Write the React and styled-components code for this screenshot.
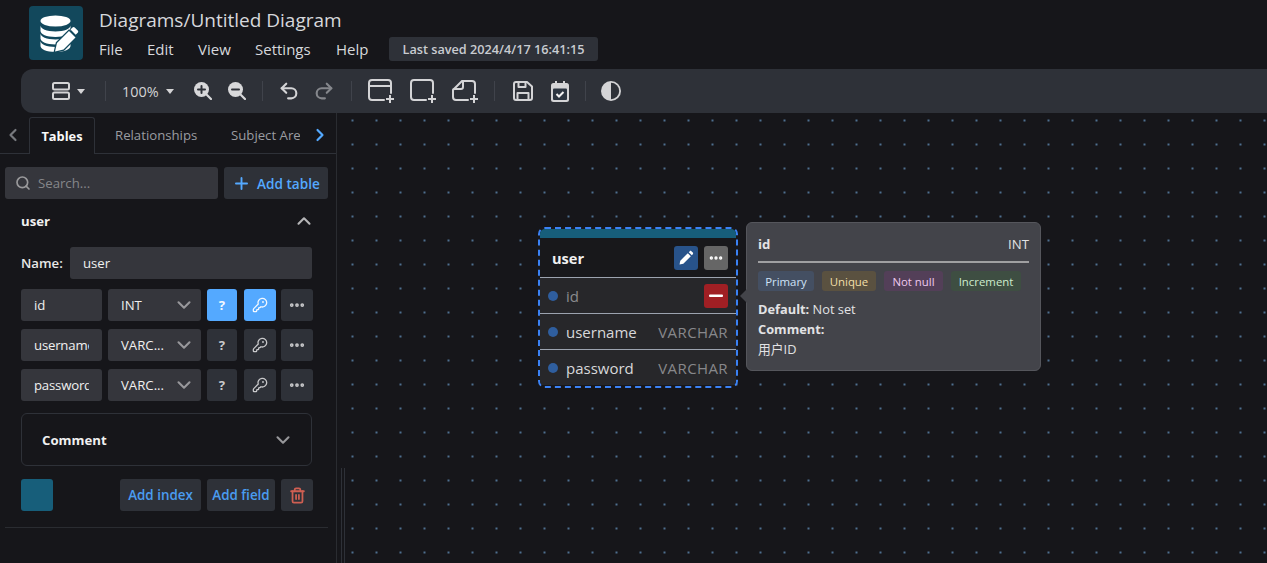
import styled, { createGlobalStyle } from "styled-components";
import { ChevronDown, ChevronUp, ChevronLeft, ChevronRight, Search, Plus, KeyRound, Ellipsis, Trash2, Undo2, Redo2 } from "lucide-react";

const Global = createGlobalStyle`
  html, body { margin: 0; height: 100%; background: #16161a; overflow: hidden; }
  * { box-sizing: border-box; }
  body { font-family: "Open Sans", "Noto Sans CJK SC", sans-serif; color: #f0f0f0; }
`;

const Page = styled.div`
  width: 1267px;
  height: 563px;
  display: flex;
  flex-direction: column;
  overflow: hidden;
`;

const Header = styled.header`
  height: 69px;
  display: flex;
  padding: 6px 0 0 29px;
  gap: 16px;
`;

const Logo = styled.div`
  width: 54px;
  height: 54px;
  border-radius: 4px;
  background: #12485c;
`;

const HeaderText = styled.div`
  display: flex;
  flex-direction: column;
  padding-top: 1px;
`;

const Title = styled.div`
  font-size: 19px;
  line-height: 26px;
  color: #d6d8dc;
`;

const MenuRow = styled.nav`
  display: flex;
  align-items: center;
  margin-top: 4px;
  height: 24px;
`;

const MenuItem = styled.span`
  font-size: 15px;
  color: #d6d8dc;
  width: ${(p) => p.$w}px;
`;

const SavedBadge = styled.span`
  height: 24px;
  width: 209px;
  background: #2e3138;
  border-radius: 3px;
  font-size: 12.7px;
  font-weight: 600;
  color: #c9ccd1;
  display: flex;
  align-items: center;
  justify-content: center;
`;

const Toolbar = styled.div`
  height: 44px;
  margin-left: 21px;
  background: #2e3138;
  border-radius: 12px 0 0 12px;
  display: flex;
  align-items: center;
  color: #d4d4d6;
  padding-left: 31px;
`;

const ToolGroup = styled.div`
  display: flex;
  align-items: center;
  gap: ${(p) => p.$gap || 0}px;
  margin-left: ${(p) => p.$ml || 0}px;
`;

const Sep = styled.div`
  width: 1px;
  height: 20px;
  background: #40434b;
  margin: 0 ${(p) => p.$r}px 0 ${(p) => p.$l}px;
`;

const Percent = styled.span`
  font-size: 14.4px;
  color: #d4d4d6;
  margin-right: 7px;
`;

const Caret = styled.span`
  width: 0;
  height: 0;
  border-left: 4.5px solid transparent;
  border-right: 4.5px solid transparent;
  border-top: 5px solid #d4d4d6;
  margin-left: ${(p) => p.$ml || 0}px;
`;

const Main = styled.div`
  flex: 1;
  display: flex;
  min-height: 0;
`;

const Sidebar = styled.aside`
  width: 337px;
  flex: none;
  border-right: 1px solid #2a2c31;
  display: flex;
  flex-direction: column;
`;

const Tabs = styled.div`
  height: 41px;
  padding-top: 4px;
  border-bottom: 1px solid #2e3138;
  display: flex;
  align-items: stretch;
`;

const TabArrow = styled.div`
  width: ${(p) => p.$w}px;
  flex: none;
  display: flex;
  align-items: center;
  justify-content: ${(p) => p.$align || "center"};
  padding-left: ${(p) => p.$pl || 0}px;
  color: ${(p) => (p.$on ? "#54a9ff" : "#77797e")};
`;

const ActiveTab = styled.div`
  width: 66px;
  flex: none;
  border: 1px solid #2e3138;
  border-bottom: none;
  border-radius: 3px 3px 0 0;
  font-size: 12.8px;
  font-weight: 700;
  color: #f9f9f9;
  display: flex;
  align-items: center;
  justify-content: center;
  margin-bottom: -1px;
  background: #16161a;
`;

const Tab = styled.div`
  font-size: 13.2px;
  color: #9a9ca1;
  display: flex;
  align-items: center;
  flex: none;
  margin-left: ${(p) => p.$ml}px;
  width: ${(p) => p.$w}px;
  overflow: hidden;
  white-space: nowrap;
`;

const SearchRow = styled.div`
  display: flex;
  gap: 6px;
  padding: 13px 8px 0 5px;
`;

const SearchBox = styled.div`
  flex: 1;
  height: 32px;
  background: #35363c;
  border-radius: 3px;
  display: flex;
  align-items: center;
  gap: 7px;
  padding-left: 10px;
  font-size: 13.2px;
  color: #85868a;
`;

const AddTable = styled.div`
  width: 104px;
  height: 32px;
  background: #2e3138;
  border-radius: 3px;
  display: flex;
  align-items: center;
  gap: 6px;
  padding-left: 8px;
  font-size: 13.6px;
  font-weight: 600;
  color: #54a9ff;
`;

const Section = styled.section`
  padding: 0 16px;
  border-bottom: 1px solid #2a2c31;
  margin: 0 8px 0 5px;
  height: 329px;
`;

const SectionHead = styled.div`
  display: flex;
  justify-content: space-between;
  align-items: center;
  height: 22px;
  margin-top: 11px;
  font-size: 13.2px;
  font-weight: 700;
  & svg { margin-right: -3px; }
`;

const NameRow = styled.div`
  display: flex;
  align-items: center;
  margin-top: 15px;
  font-size: 13.2px;
  font-weight: 600;
  color: #e8e8e8;
`;

const Label = styled.span`
  width: 49px;
  flex: none;
`;

const Input = styled.div`
  height: 32px;
  width: ${(p) => p.$w}px;
  flex: none;
  background: #35363c;
  border-radius: 3px;
  display: flex;
  align-items: center;
  padding-left: 13px;
  font-size: 13.2px;
  font-weight: 400;
  color: #f0f0f0;
  overflow: hidden;
  white-space: nowrap;
`;

const Clip = styled.span`
  display: block;
  width: 55px;
  overflow: hidden;
  letter-spacing: -0.2px;
`;

const FieldRow = styled.div`
  display: flex;
  margin-top: ${(p) => p.$mt || 8}px;
  gap: 6px;
`;

const SelectBox = styled(Input)`
  justify-content: space-between;
  padding-right: 6px;
`;

const IconBtn = styled.div`
  width: ${(p) => p.$w || 32}px;
  height: 32px;
  flex: none;
  margin-left: ${(p) => p.$ml || 0}px;
  background: ${(p) => (p.$on ? "#54a9ff" : "#2e3138")};
  color: ${(p) => (p.$on ? "#f4f9ff" : "#c9c9cb")};
  border-radius: 3px;
  display: flex;
  align-items: center;
  justify-content: center;
  font-size: 13.2px;
  font-weight: 700;
`;

const CommentBox = styled.div`
  margin-top: 12px;
  height: 53px;
  border: 1px solid #2e3138;
  border-radius: 6px;
  display: flex;
  align-items: center;
  justify-content: space-between;
  padding: 0 17px 0 20px;
  font-size: 13.2px;
  font-weight: 700;
`;

const Actions = styled.div`
  display: flex;
  align-items: center;
  gap: 6px;
  margin-top: 13px;
  width: 292px;
`;

const Swatch = styled.div`
  width: 32px;
  height: 32px;
  border-radius: 3px;
  background: #175e7a;
  margin-right: auto;
`;

const ActionBtn = styled.div`
  width: ${(p) => p.$w}px;
  height: 32px;
  background: #2e3138;
  border-radius: 3px;
  color: #4a9cf0;
  font-size: 13.4px;
  font-weight: 600;
  display: flex;
  align-items: center;
  justify-content: center;
`;

const Canvas = styled.main`
  flex: 1;
  position: relative;
  background-color: #16161a;
  background-image: radial-gradient(circle at center, #4d6f8f 0.9px, transparent 1.1px);
  background-size: 24px 24px;
  background-position: 3.5px -4.5px;
`;

const Handle = styled.div`
  position: absolute;
  left: 4px;
  top: 355px;
  bottom: 0;
  width: 4px;
  border-left: 1px solid #2e3138;
  border-right: 1px solid #2e3138;
`;

const TableNode = styled.div`
  position: absolute;
  left: 201px;
  top: 114px;
  width: 200px;
  height: 161px;
  border: 2px dashed #3b82f6;
  border-radius: 7px;
  background: #18181b;
  overflow: hidden;
`;

const NodeBar = styled.div`
  height: 9px;
  background: #175e7a;
`;

const NodeHead = styled.div`
  height: 39px;
  display: flex;
  align-items: center;
  padding: 0 8px 0 12px;
  gap: 6px;
  font-size: 14.6px;
  font-weight: 700;
  color: #f0f0f0;
`;

const NodeName = styled.span`
  margin-right: auto;
`;

const NodeBtn = styled.div`
  width: 24px;
  height: 24px;
  border-radius: 3px;
  background: ${(p) => p.$bg};
  margin-left: ${(p) => (p.$push ? "auto" : "0")};
  display: flex;
  align-items: center;
  justify-content: center;
  color: #fff;
`;

const NodeRow = styled.div`
  height: 36px;
  border-top: 1px solid #9ca3af;
  background: #27272a;
  display: flex;
  align-items: center;
  padding: 0 8px;
  font-size: 15px;
  color: ${(p) => (p.$dim ? "#8b8b8e" : "#d8d8da")};
`;

const Dot = styled.span`
  width: 10px;
  height: 10px;
  border-radius: 50%;
  background: #2f5e9e;
  margin-right: 8px;
`;

const RowType = styled.span`
  margin-left: auto;
  color: #87878b;
  letter-spacing: 0.4px;
`;

const Tooltip = styled.div`
  position: absolute;
  left: 409px;
  top: 109px;
  width: 295px;
  height: 149px;
  background: #43444a;
  border: 1px solid #55565c;
  border-radius: 6px;
  padding: 12px 11px;
  font-size: 13px;
  color: #e2e2e4;

  &::before {
    content: "";
    position: absolute;
    left: -7px;
    top: 66px;
    border-top: 7px solid transparent;
    border-bottom: 7px solid transparent;
    border-right: 7px solid #43444a;
  }
`;

const TipHead = styled.div`
  display: flex;
  justify-content: space-between;
  padding-bottom: 8px;
  border-bottom: 2px solid #a0a0a2;
  font-size: 13.2px;
  line-height: 18px;
`;

const TipTags = styled.div`
  display: flex;
  gap: 8px;
  margin-top: 8px;
`;

const Tag = styled.span`
  height: 20px;
  width: ${(p) => p.$w}px;
  border-radius: 3px;
  background: ${(p) => p.$bg};
  color: ${(p) => p.$fg};
  font-size: 11.4px;
  display: flex;
  align-items: center;
  justify-content: center;
`;

const TipLine = styled.div`
  line-height: 20px;
  font-size: 12.8px;
  margin-top: ${(p) => p.$mt || 0}px;
  & b { font-weight: 700; }
`;

const LogoIcon = () => (
  <svg width="54" height="54" viewBox="0 0 54 54" fill="#fff">
    <ellipse cx="26.500" cy="15" rx="15" ry="5.500" />
    <path d="M11.500 19.500c0 3 6 6 15 6s15-3 15-6v5.500c0 3-6 6-15 6s-15-3-15-6z" />
    <path d="M11.500 27.500c0 3 6 6 15 6s15-3 15-6v5c0 3-6 6-15 6s-15-3-15-6z" />
    <path d="M11.500 35c0 3 6 6 15 6s15-3 15-6v5c0 3-6 6-15 6s-15-3-15-6z" />
    <path d="M28 37l12-12 6.500 6.500-12 12-8.500 2z" stroke="#12485c" strokeWidth="2.500" paintOrder="stroke" />
    <path d="M41.500 23.500l2-2c.7-.7 1.500-.7 2.200 0l3 3c.7.7.7 1.500 0 2.200l-2 2z" stroke="#12485c" strokeWidth="1.500" paintOrder="stroke" />
  </svg>
);

const RowsIcon = () => (
  <svg width="18" height="18" viewBox="0 0 18 18" fill="none" stroke="#d4d4d6" strokeWidth="2">
    <rect x="1" y="1" width="16" height="6.500" rx="1.500" />
    <rect x="1" y="10.500" width="16" height="6.500" rx="1.500" />
  </svg>
);

const ZoomIcon = ({ plus }) => (
  <svg width="18" height="18" viewBox="0 0 18 18">
    <circle cx="7.500" cy="7.500" r="7.500" fill="#d8d8da" />
    <path d="M12.500 12.500l4.500 4.500" stroke="#d8d8da" strokeWidth="2.200" strokeLinecap="round" />
    <path d={plus ? "M4 7.500h7M7.500 4v7" : "M4 7.500h7"} stroke="#2e3138" strokeWidth="2" strokeLinecap="round" />
  </svg>
);

const AddShape = ({ kind }) => (
  <svg width="27" height="24" viewBox="0 0 27 24" fill="none" stroke="#d4d4d6" strokeWidth="2" strokeLinecap="round">
    {kind === "note"
      ? <path d="M16 21H4a3 3 0 0 1-3-3v-7l9-9h10a3 3 0 0 1 3 3v9M1.500 10H9c1.500 0 2-.8 2-2V2" />
      : <path d="M16 21H4a3 3 0 0 1-3-3V4a3 3 0 0 1 3-3h16a3 3 0 0 1 3 3v10" />}
    {kind === "table" && <path d="M1 7h22" />}
    <path d="M22 16v8M18 20h8" strokeLinecap="butt" />
  </svg>
);

const SaveIcon = () => (
  <svg width="20" height="20" viewBox="0 0 20 20" fill="none" stroke="#d4d4d6" strokeWidth="2" strokeLinejoin="round">
    <path d="M3 1h11l5 4.500V17a2 2 0 0 1-2 2H3a2 2 0 0 1-2-2V3a2 2 0 0 1 2-2z" />
    <path d="M5.500 1v5h7V1M4.500 19v-7h11v7" />
  </svg>
);

const CalendarIcon = () => (
  <svg width="18" height="21" viewBox="0 0 18 21">
    <rect x="4" y="0" width="2" height="4" fill="#d4d4d6" />
    <rect x="12" y="0" width="2" height="4" fill="#d4d4d6" />
    <rect x="0" y="2" width="18" height="19" rx="2.500" fill="#d4d4d6" />
    <rect x="2" y="7.500" width="14" height="11.500" rx="1" fill="#2b3440" />
    <path d="M5.500 13l2.500 2.500 4.500-4.500" fill="none" stroke="#f2f2f2" strokeWidth="2" />
  </svg>
);

const ContrastIcon = () => (
  <svg width="20" height="20" viewBox="0 0 20 20">
    <circle cx="10" cy="10" r="10" fill="#d4d4d6" />
    <path d="M10 1.800a8.200 8.200 0 0 1 0 16.400z" fill="#2e3138" />
  </svg>
);

const PencilIcon = () => (
  <svg width="16" height="16" viewBox="0 0 16 16" fill="#fff">
    <path d="M1.500 14.500l.8-3.800 7.500-7.500 3 3-7.500 7.500z" />
    <path d="M10.800 2.200l1-1c.5-.5 1.100-.5 1.600 0l1.400 1.400c.5.500.5 1.100 0 1.600l-1 1z" />
  </svg>
);

const fields = [
  { name: "id", type: "INT", on: true },
  { name: "username", type: "VARC..." },
  { name: "password", type: "VARC..." },
];

const menus = [["File", 48], ["Edit", 51], ["View", 57], ["Settings", 81], ["Help", 53]];

function App() {
  return (
    <Page>
      <Global />
      <Header>
        <Logo><LogoIcon /></Logo>
        <HeaderText>
          <Title>Diagrams/Untitled Diagram</Title>
          <MenuRow>
            {menus.map(([label, w]) => <MenuItem key={label} $w={w}>{label}</MenuItem>)}
            <SavedBadge>Last saved 2024/4/17 16:41:15</SavedBadge>
          </MenuRow>
        </HeaderText>
      </Header>

      <Toolbar>
        <ToolGroup>
          <RowsIcon />
          <Caret $ml={7} />
        </ToolGroup>
        <Sep $l={20} $r={16} />
        <ToolGroup>
          <Percent>100%</Percent>
          <Caret />
        </ToolGroup>
        <ToolGroup $gap={16} $ml={20}>
          <ZoomIcon plus />
          <ZoomIcon />
        </ToolGroup>
        <Sep $l={16} $r={15} />
        <ToolGroup $gap={13}>
          <Undo2 size={22} color="#d4d4d6" strokeWidth={2.300} />
          <Redo2 size={22} color="#85878c" strokeWidth={2.300} />
        </ToolGroup>
        <Sep $l={16} $r={16} />
        <ToolGroup $gap={15}>
          <AddShape kind="table" />
          <AddShape kind="area" />
          <AddShape kind="note" />
        </ToolGroup>
        <Sep $l={15} $r={18} />
        <ToolGroup $gap={18}>
          <SaveIcon />
          <CalendarIcon />
        </ToolGroup>
        <Sep $l={16} $r={15} />
        <ContrastIcon />
      </Toolbar>

      <Main>
        <Sidebar>
          <Tabs>
            <TabArrow $w={29} $align="flex-start" $pl={3}><ChevronLeft size={20} strokeWidth={2.600} /></TabArrow>
            <ActiveTab>Tables</ActiveTab>
            <Tab $ml={20} $w={95}>Relationships</Tab>
            <Tab $ml={21} $w={69}>Subject Areas</Tab>
            <TabArrow $w={40}><ChevronRight size={20} strokeWidth={2.600} color="#54a9ff" /></TabArrow>
          </Tabs>
          <SearchRow>
            <SearchBox><Search size={16} color="#9a9a9c" strokeWidth={2.500} />Search...</SearchBox>
            <AddTable><Plus size={19} strokeWidth={2.400} />Add table</AddTable>
          </SearchRow>
          <Section>
            <SectionHead>user<ChevronUp size={22} strokeWidth={2.300} color="#b5b5b7" /></SectionHead>
            <NameRow><Label>Name:</Label><Input $w={242}>user</Input></NameRow>
            {fields.map((f, i) => (
              <FieldRow key={f.name} $mt={i === 0 ? 10 : 8}>
                <Input $w={81}><Clip>{f.name}</Clip></Input>
                <SelectBox $w={93}>{f.type}<ChevronDown size={22} color="#97979a" strokeWidth={2.300} /></SelectBox>
                <IconBtn $w={30} $on={f.on}>?</IconBtn>
                <IconBtn $ml={1} $on={f.on}><KeyRound size={16} strokeWidth={1.900} /></IconBtn>
                <IconBtn $ml={-1}><Ellipsis size={18} strokeWidth={3} /></IconBtn>
              </FieldRow>
            ))}
            <CommentBox>Comment<ChevronDown size={22} color="#97979a" strokeWidth={2.300} /></CommentBox>
            <Actions>
              <Swatch />
              <ActionBtn $w={81}>Add index</ActionBtn>
              <ActionBtn $w={68}>Add field</ActionBtn>
              <IconBtn><Trash2 size={17} color="#cf5f52" strokeWidth={2.500} /></IconBtn>
            </Actions>
          </Section>
        </Sidebar>

        <Canvas>
          <Handle />
          <TableNode>
            <NodeBar />
            <NodeHead>
              <NodeName>user</NodeName>
              <NodeBtn $bg="#28538a"><PencilIcon /></NodeBtn>
              <NodeBtn $bg="#666"><Ellipsis size={16} strokeWidth={3} /></NodeBtn>
            </NodeHead>
            <NodeRow $dim>
              <Dot />id
              <NodeBtn $bg="#a01f24" $push>
                <svg width="14" height="4" viewBox="0 0 14 4"><rect y="0.500" width="14" height="2.500" rx="1" fill="#fff" /></svg>
              </NodeBtn>
            </NodeRow>
            <NodeRow><Dot />username<RowType>VARCHAR</RowType></NodeRow>
            <NodeRow><Dot />password<RowType>VARCHAR</RowType></NodeRow>
          </TableNode>

          <Tooltip>
            <TipHead><b>id</b><span>INT</span></TipHead>
            <TipTags>
              <Tag $w={56} $bg="#444f62" $fg="#cfe3f8">Primary</Tag>
              <Tag $w={54} $bg="#5a5140" $fg="#f2dfa8">Unique</Tag>
              <Tag $w={59} $bg="#533f58" $fg="#eec8ee">Not null</Tag>
              <Tag $w={70} $bg="#3e4e42" $fg="#cdeccd">Increment</Tag>
            </TipTags>
            <TipLine $mt={8}><b>Default:</b> Not set</TipLine>
            <TipLine><b>Comment:</b></TipLine>
            <TipLine>用户ID</TipLine>
          </Tooltip>
        </Canvas>
      </Main>
    </Page>
  );
}

export default App;
